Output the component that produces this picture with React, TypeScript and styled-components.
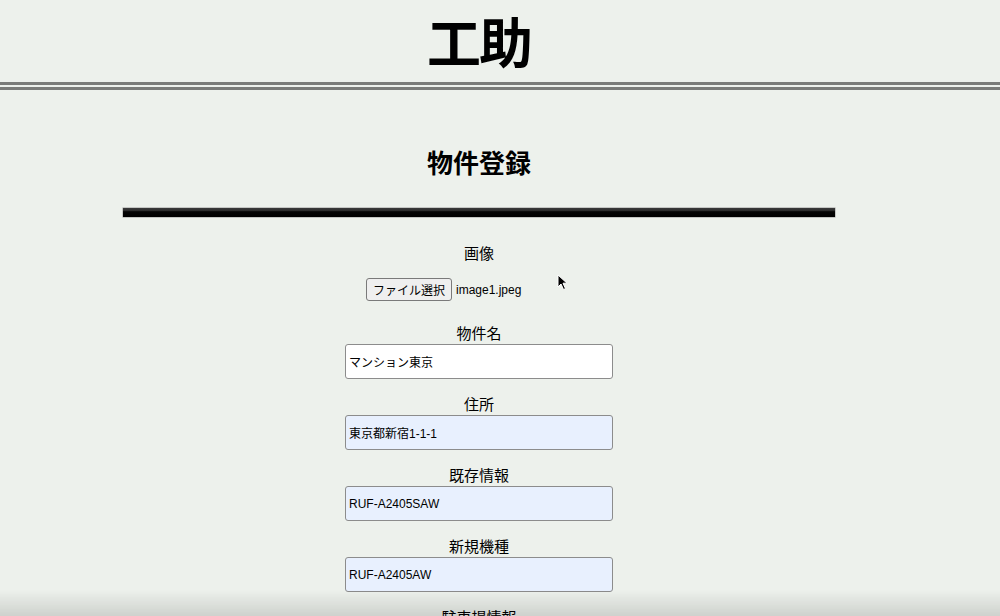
import React from 'react';
import styled, { createGlobalStyle } from 'styled-components';

const GlobalStyle = createGlobalStyle`
  html, body {
    margin: 0;
    padding: 0;
    background-color: #edf1ec;
    color: #000;
    font-family: "Liberation Sans", "Noto Sans CJK JP", sans-serif;
  }
  * {
    box-sizing: border-box;
  }
`;

const Header = styled.header`
  width: 100%;
  height: 90px;
  border-bottom: 8px double #7a7c79;
`;

const HeaderInner = styled.div`
  width: 958px;
  height: 82px;
  display: flex;
  align-items: center;
  justify-content: center;
`;

const Logo = styled.h1`
  margin: 0;
  font-family: "Noto Sans CJK JP", sans-serif;
  font-size: 54px;
  font-weight: 700;
  line-height: 1;
  letter-spacing: -2px;
`;

const Main = styled.main`
  width: 958px;
  display: flex;
  flex-direction: column;
  align-items: center;
`;

const PageTitle = styled.h2`
  margin: 56px 0 0;
  font-family: "Noto Sans CJK JP", sans-serif;
  font-size: 26px;
  font-weight: 700;
  line-height: 32px;
`;

const Divider = styled.div`
  width: 712px;
  height: 9px;
  margin-top: 30px;
  background: linear-gradient(#3a3a3a 0%, #2a2a2a 35%, #050505 40%, #000 100%);
  box-shadow: 0 0 0 0.5px #9a9a9a;
`;

const Form = styled.form`
  display: flex;
  flex-direction: column;
  align-items: center;
  margin-top: 27px;
`;

const Field = styled.div<{ $gap?: number }>`
  display: flex;
  flex-direction: column;
  align-items: center;
  margin-bottom: ${({ $gap }) => $gap ?? 16}px;
`;

const Label = styled.label`
  font-family: "Noto Sans CJK JP", sans-serif;
  font-size: 15px;
  line-height: 18px;
  height: 20px;
`;

const FileRow = styled.div`
  width: 226px;
  height: 23px;
  margin-top: 14px;
  display: flex;
  align-items: center;
  gap: 4px;
`;

const FileButton = styled.button`
  height: 23px;
  padding: 0 6px;
  font-family: "Noto Sans CJK JP", sans-serif;
  font-size: 12px;
  color: #000;
  background-color: #efefef;
  border: 1px solid #7a7a7a;
  border-radius: 3px;
`;

const FileName = styled.span`
  font-size: 12px;
`;

const TextInput = styled.input<{ $filled?: boolean }>`
  width: 268px;
  height: 35px;
  padding: 0 3px;
  font-family: "Liberation Sans", "Noto Sans CJK JP", sans-serif;
  font-size: 12px;
  color: #000;
  background-color: ${({ $filled }) => ($filled ? '#e8f0fe' : '#ffffff')};
  border: 1px solid #8c8c8c;
  border-radius: 3px;
  outline: none;
`;

const BottomShade = styled.div`
  position: fixed;
  left: 0;
  right: 0;
  bottom: 0;
  height: 26px;
  pointer-events: none;
  background: linear-gradient(rgba(0, 0, 0, 0), rgba(0, 0, 0, 0.13));
`;

const Cursor = styled.svg`
  position: absolute;
  left: 557px;
  top: 274px;
  pointer-events: none;
`;

const fields = [
  { label: '物件名', value: 'マンション東京', filled: false },
  { label: '住所', value: '東京都新宿1-1-1', filled: true },
  { label: '既存情報', value: 'RUF-A2405SAW', filled: true },
  { label: '新規機種', value: 'RUF-A2405AW', filled: true },
  { label: '駐車場情報', value: '', filled: false },
];

export default function App() {
  return (
    <>
      <GlobalStyle />
      <Header>
        <HeaderInner>
          <Logo>工助</Logo>
        </HeaderInner>
      </Header>
      <Main>
        <PageTitle>物件登録</PageTitle>
        <Divider />
        <Form onSubmit={(e) => e.preventDefault()}>
          <Field $gap={23}>
            <Label>画像</Label>
            <FileRow>
              <FileButton type="button">ファイル選択</FileButton>
              <FileName>image1.jpeg</FileName>
            </FileRow>
          </Field>
          {fields.map((f) => (
            <Field key={f.label}>
              <Label>{f.label}</Label>
              <TextInput $filled={f.filled} defaultValue={f.value} readOnly />
            </Field>
          ))}
        </Form>
      </Main>
      <Cursor width="12" height="17" viewBox="0 0 12 17">
        <path d="M1 1 L1 13 L4 10 L6.5 15.5 L8.5 14.6 L6 9.2 L10 9.2 Z" fill="#000" stroke="#fff" strokeWidth="1" />
      </Cursor>
      <BottomShade />
    </>
  );
}
